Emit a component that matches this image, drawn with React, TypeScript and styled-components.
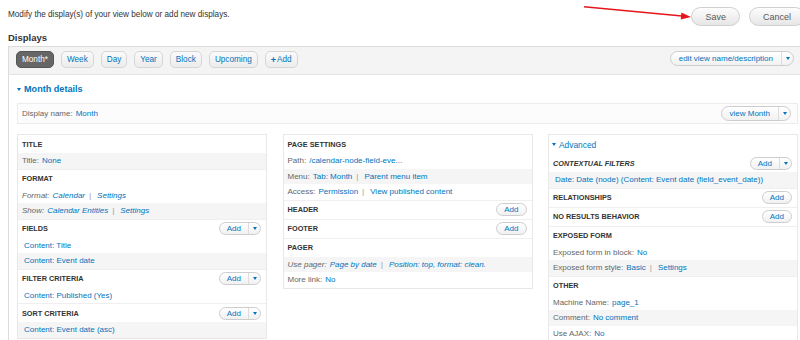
import React from "react";
import styled, { createGlobalStyle } from "styled-components";

const GlobalStyle = createGlobalStyle`
  html, body {
    margin: 0;
    padding: 0;
    background: #fff;
  }
  body {
    width: 800px;
    height: 340px;
    overflow: hidden;
    font-family: "Liberation Sans", Arial, sans-serif;
    color: #333;
  }
`;

const Page = styled.div`
  position: relative;
  width: 800px;
  box-sizing: border-box;
  padding-left: 8px;
`;

const TopBar = styled.div`
  display: flex;
  justify-content: space-between;
  align-items: flex-start;
  height: 30px;
`;

const Intro = styled.p`
  margin: 10px 0 0;
  font-size: 8.2px;
  line-height: 10px;
  color: #333;
`;

const Actions = styled.div`
  display: flex;
  gap: 9px;
  margin-top: 7px;
  margin-right: -5px;
`;

const PillButton = styled.button`
  height: 19px;
  padding: 0 13px;
  border: 1px solid #cfcfcf;
  border-radius: 10px;
  background: linear-gradient(#fdfdfd, #e6e6e6);
  font-family: inherit;
  font-size: 9px;
  color: #5a5a5a;
`;

const Arrow = styled.svg`
  position: absolute;
  left: 0;
  top: 0;
  pointer-events: none;
`;

const Heading = styled.h2`
  margin: 0;
  height: 16px;
  font-size: 9.5px;
  line-height: 16px;
  font-weight: bold;
  color: #333;
`;

const DisplaysBox = styled.div`
  margin-right: -6px;
  border: 1px solid #dcdcdc;
  border-right: none;
  border-bottom: none;
  background: #fff;
`;

const TabBar = styled.div`
  display: flex;
  align-items: flex-start;
  gap: 7px;
  height: 28px;
  box-sizing: border-box;
  padding: 4px 12px 0 7px;
  background: #f4f4f4;
  border-bottom: 1px solid #e4e4e4;
`;

const Tab = styled.span<{ $active?: boolean }>`
  display: inline-flex;
  align-items: center;
  height: 17px;
  box-sizing: border-box;
  padding: 0 5px;
  border: 1px solid ${(p) => (p.$active ? "#555" : "#d6d6d6")};
  border-radius: 5px;
  background: ${(p) => (p.$active ? "#666" : "linear-gradient(#fafafa, #ececec)")};
  color: ${(p) => (p.$active ? "#fff" : "#0074bd")};
  font-size: 8.2px;
`;

const Plus = styled.b`
  font-size: 9px;
  margin-right: 1px;
`;

const Spacer = styled.div`
  flex: 1;
`;

const Drop = styled.span<{ $h?: number }>`
  display: inline-flex;
  align-items: stretch;
  height: ${(p) => p.$h ?? 14}px;
  box-sizing: border-box;
  border: 1px solid #cdcdcd;
  border-radius: 8px;
  background: linear-gradient(#fff, #f1f1f1);
  color: #0074bd;
  font-size: 8px;
  font-weight: normal;
  font-style: normal;
  text-transform: none;
  overflow: hidden;
`;

const DropMain = styled.span<{ $pad?: number }>`
  display: inline-flex;
  align-items: center;
  padding: 0 ${(p) => p.$pad ?? 7}px;
`;

const DropToggle = styled.span`
  display: inline-flex;
  align-items: center;
  justify-content: center;
  width: 11px;
  border-left: 1px solid #ddd;
`;

const Caret = styled.i<{ $size?: number }>`
  display: inline-block;
  width: 0;
  height: 0;
  border-left: ${(p) => p.$size ?? 2.5}px solid transparent;
  border-right: ${(p) => p.$size ?? 2.5}px solid transparent;
  border-top: ${(p) => (p.$size ?? 2.5) + 0.5}px solid currentColor;
`;

const Details = styled.div`
  padding: 8px 8px 0;
`;

const Toggle = styled.div<{ $bold?: boolean }>`
  display: flex;
  align-items: center;
  gap: 3px;
  height: 12px;
  color: #0074bd;
  font-size: ${(p) => (p.$bold ? 9.1 : 8.4)}px;
  font-weight: ${(p) => (p.$bold ? "bold" : "normal")};
`;

const NameBox = styled.div`
  display: flex;
  align-items: center;
  justify-content: space-between;
  height: 21px;
  box-sizing: border-box;
  margin-top: 8px;
  padding: 0 6px 0 4px;
  border: 1px solid #ececec;
  background: #fcfcfc;
  font-size: 8px;
`;

const Columns = styled.div`
  display: grid;
  grid-template-columns: repeat(3, 1fr);
  column-gap: 15.5px;
  align-items: start;
  margin-top: 10px;
`;

const Column = styled.div`
  border: 1px solid #e8e8e8;
  background: #fff;
`;

const AdvancedHead = styled.div`
  display: flex;
  align-items: center;
  height: 19px;
  padding-left: 3px;
`;

const Section = styled.div`
  & + & {
    border-top: 1px solid #efefef;
  }
`;

const SectionHead = styled.div<{ $italic?: boolean }>`
  display: flex;
  align-items: center;
  justify-content: space-between;
  height: 18px;
  padding: 0 5px 0 4px;
  font-size: 7.3px;
  font-weight: bold;
  font-style: ${(p) => (p.$italic ? "italic" : "normal")};
  color: #333;
`;

const SectionTitle = styled.span`
  text-transform: uppercase;
`;

const Row = styled.div<{ $shaded?: boolean; $italic?: boolean; $indent?: boolean }>`
  display: flex;
  align-items: center;
  height: 15.5px;
  padding-left: ${(p) => (p.$indent ? 6 : 4)}px;
  background: ${(p) => (p.$shaded ? "#f5f5f5" : "transparent")};
  font-size: 8px;
  font-style: ${(p) => (p.$italic ? "italic" : "normal")};
  white-space: nowrap;
`;

const Label = styled.span`
  color: #666;
  margin-right: 3px;
`;

const Link = styled.a`
  color: #0074bd;
  text-decoration: none;
`;

const Sep = styled.span`
  color: #999;
  margin: 0 6px 0 4px;
`;

type RowData = {
  label?: string;
  values: string[];
  shaded?: boolean;
  italic?: boolean;
  indent?: boolean;
};

type SectionData = {
  title: string;
  add?: "plain" | "menu";
  italic?: boolean;
  rows: RowData[];
};

const leftColumn: SectionData[] = [
  { title: "Title", rows: [{ label: "Title:", values: ["None"], shaded: true }] },
  {
    title: "Format",
    rows: [
      { label: "Format:", values: ["Calendar", "Settings"], italic: true },
      { label: "Show:", values: ["Calendar Entities", "Settings"], italic: true, shaded: true },
    ],
  },
  {
    title: "Fields",
    add: "menu",
    rows: [
      { values: ["Content: Title"], indent: true },
      { values: ["Content: Event date"], indent: true, shaded: true },
    ],
  },
  {
    title: "Filter criteria",
    add: "menu",
    rows: [{ values: ["Content: Published (Yes)"], indent: true }],
  },
  {
    title: "Sort criteria",
    add: "menu",
    rows: [{ values: ["Content: Event date (asc)"], indent: true, shaded: true }],
  },
];

const middleColumn: SectionData[] = [
  {
    title: "Page settings",
    rows: [
      { label: "Path:", values: ["/calendar-node-field-eve..."] },
      { label: "Menu:", values: ["Tab: Month", "Parent menu item"], shaded: true },
      { label: "Access:", values: ["Permission", "View published content"] },
    ],
  },
  { title: "Header", add: "plain", rows: [] },
  { title: "Footer", add: "plain", rows: [] },
  {
    title: "Pager",
    rows: [
      {
        label: "Use pager:",
        values: ["Page by date", "Position: top, format: clean."],
        italic: true,
        shaded: true,
      },
      { label: "More link:", values: ["No"] },
    ],
  },
];

const rightColumn: SectionData[] = [
  {
    title: "Contextual filters",
    add: "menu",
    italic: true,
    rows: [
      {
        values: ["Date: Date (node) (Content: Event date (field_event_date))"],
        shaded: true,
        indent: true,
      },
    ],
  },
  { title: "Relationships", add: "plain", rows: [] },
  { title: "No results behavior", add: "plain", rows: [] },
  {
    title: "Exposed form",
    rows: [
      { label: "Exposed form in block:", values: ["No"] },
      { label: "Exposed form style:", values: ["Basic", "Settings"], shaded: true },
    ],
  },
  {
    title: "Other",
    rows: [
      { label: "Machine Name:", values: ["page_1"] },
      { label: "Comment:", values: ["No comment"], shaded: true },
      { label: "Use AJAX:", values: ["No"] },
    ],
  },
];

const AddButton = ({ menu }: { menu?: boolean }) => (
  <Drop $h={13}>
    <DropMain>Add</DropMain>
    {menu && (
      <DropToggle>
        <Caret />
      </DropToggle>
    )}
  </Drop>
);

const SectionBlock = ({ section }: { section: SectionData }) => (
  <Section>
    <SectionHead $italic={section.italic}>
      <SectionTitle>{section.title}</SectionTitle>
      {section.add && <AddButton menu={section.add === "menu"} />}
    </SectionHead>
    {section.rows.map((row, i) => (
      <Row key={i} $shaded={row.shaded} $italic={row.italic} $indent={row.indent}>
        {row.label && <Label>{row.label}</Label>}
        {row.values.map((v, j) => (
          <React.Fragment key={j}>
            {j > 0 && <Sep>|</Sep>}
            <Link>{v}</Link>
          </React.Fragment>
        ))}
      </Row>
    ))}
  </Section>
);

const tabs = ["Week", "Day", "Year", "Block", "Upcoming"];

const App = () => (
  <Page>
    <GlobalStyle />
    <TopBar>
      <Intro>Modify the display(s) of your view below or add new displays.</Intro>
      <Actions>
        <PillButton>Save</PillButton>
        <PillButton>Cancel</PillButton>
      </Actions>
    </TopBar>
    <Arrow width="800" height="30" viewBox="0 0 800 30">
      <line x1="584" y1="6.7" x2="682" y2="16" stroke="#e5161d" strokeWidth="1.4" />
      <polygon points="691,16.9 681.4,12.6 680.7,19.6" fill="#e5161d" />
    </Arrow>
    <Heading>Displays</Heading>
    <DisplaysBox>
      <TabBar>
        <Tab $active>Month*</Tab>
        {tabs.map((t) => (
          <Tab key={t}>{t}</Tab>
        ))}
        <Tab>
          <Plus>+</Plus>Add
        </Tab>
        <Spacer />
        <Drop $h={15}>
          <DropMain $pad={8}>edit view name/description</DropMain>
          <DropToggle>
            <Caret />
          </DropToggle>
        </Drop>
      </TabBar>
      <Details>
        <Toggle $bold>
          <Caret $size={2.5} />
          Month details
        </Toggle>
        <NameBox>
          <span>
            <Label>Display name:</Label>
            <Link>Month</Link>
          </span>
          <Drop $h={15}>
            <DropMain $pad={8}>view Month</DropMain>
            <DropToggle>
              <Caret />
            </DropToggle>
          </Drop>
        </NameBox>
        <Columns>
          <Column>
            {leftColumn.map((s) => (
              <SectionBlock key={s.title} section={s} />
            ))}
          </Column>
          <Column>
            {middleColumn.map((s) => (
              <SectionBlock key={s.title} section={s} />
            ))}
          </Column>
          <Column>
            <AdvancedHead>
              <Toggle>
                <Caret $size={2.5} />
                Advanced
              </Toggle>
            </AdvancedHead>
            {rightColumn.map((s) => (
              <SectionBlock key={s.title} section={s} />
            ))}
          </Column>
        </Columns>
      </Details>
    </DisplaysBox>
  </Page>
);

export default App;
